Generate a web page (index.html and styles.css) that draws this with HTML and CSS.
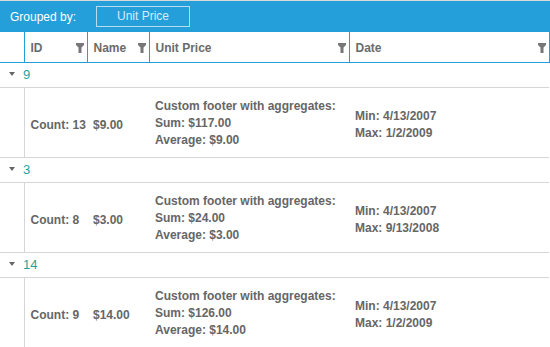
FILE: index.html
```html
<!DOCTYPE html>
<html lang="en">
<head>
    <meta charset="UTF-8">
    <title>Grouped Grid</title>
    <link rel="stylesheet" href="styles.css">
</head>
<body>

    <div class="grid">
        <!-- Group panel -->
        <div class="group-panel">
            <span class="group-label">Grouped by:</span>
            <span class="group-chip">Unit Price</span>
        </div>

        <table class="grid-table">
            <colgroup>
                <col class="col-indent">
                <col class="col-id">
                <col class="col-name">
                <col class="col-price">
                <col class="col-date">
            </colgroup>
            <thead>
                <tr>
                    <th class="indent"></th>
                    <th><span>ID</span><svg class="filter" viewBox="0 0 8 10"><path d="M0 0H8V2L5.5 4.5V10H2.5V4.5L0 2Z"/></svg></th>
                    <th><span>Name</span><svg class="filter" viewBox="0 0 8 10"><path d="M0 0H8V2L5.5 4.5V10H2.5V4.5L0 2Z"/></svg></th>
                    <th><span>Unit Price</span><svg class="filter" viewBox="0 0 8 10"><path d="M0 0H8V2L5.5 4.5V10H2.5V4.5L0 2Z"/></svg></th>
                    <th><span>Date</span><svg class="filter" viewBox="0 0 8 10"><path d="M0 0H8V2L5.5 4.5V10H2.5V4.5L0 2Z"/></svg></th>
                </tr>
            </thead>
            <tbody>
                <tr class="group-row">
                    <td colspan="5"><span class="arrow"></span><span class="group-value">9</span></td>
                </tr>
                <tr class="footer-row">
                    <td class="indent"></td>
                    <td>Count: 13</td>
                    <td>$9.00</td>
                    <td class="aggregates">Custom footer with aggregates:<br>Sum: $117.00<br>Average: $9.00</td>
                    <td>Min: 4/13/2007<br>Max: 1/2/2009</td>
                </tr>

                <tr class="group-row">
                    <td colspan="5"><span class="arrow"></span><span class="group-value">3</span></td>
                </tr>
                <tr class="footer-row">
                    <td class="indent"></td>
                    <td>Count: 8</td>
                    <td>$3.00</td>
                    <td class="aggregates">Custom footer with aggregates:<br>Sum: $24.00<br>Average: $3.00</td>
                    <td>Min: 4/13/2007<br>Max: 9/13/2008</td>
                </tr>

                <tr class="group-row">
                    <td colspan="5"><span class="arrow"></span><span class="group-value">14</span></td>
                </tr>
                <tr class="footer-row">
                    <td class="indent"></td>
                    <td>Count: 9</td>
                    <td>$14.00</td>
                    <td class="aggregates">Custom footer with aggregates:<br>Sum: $126.00<br>Average: $14.00</td>
                    <td>Min: 4/13/2007<br>Max: 1/2/2009</td>
                </tr>
            </tbody>
        </table>
    </div>

</body>
</html>
```

FILE: styles.css
```css
body {
    margin: 0;
    padding: 0;
    font-family: "Liberation Sans", Arial, sans-serif;
    font-size: 12px;
    color: #666;
    background-color: #fff;
}
.grid {
    width: 550px;
    height: 347px;
    overflow: hidden;
}

/* Group panel */
.group-panel {
    display: flex;
    align-items: center;
    height: 31px;
    border-top: 1px solid #d9d9d9;
    background-color: #259fd9;
    padding-left: 10px;
    box-sizing: content-box;
}
.group-label {
    color: #fff;
    width: 86px;
    padding-top: 1px;
}
.group-chip {
    box-sizing: border-box;
    width: 94px;
    height: 21px;
    line-height: 19px;
    border: 1px solid #b7dcf1;
    color: #d7ecf8;
    text-align: center;
}

/* Table */
.grid-table {
    border-collapse: collapse;
    table-layout: fixed;
    width: 549px;
}
.col-indent { width: 24px; }
.col-id { width: 63px; }
.col-name { width: 62px; }
.col-price { width: 200px; }
.col-date { width: 200px; }

th {
    height: 30px;
    padding: 2px 5px 0 6px;
    text-align: left;
    font-weight: bold;
    color: #6b6b6b;
    border-left: 1px solid #259fd9;
    border-right: 1px solid #259fd9;
    border-bottom: 1px solid #259fd9;
    box-sizing: border-box;
    position: relative;
}
th.indent {
    border-left: none;
}
th span {
    vertical-align: middle;
}
.filter {
    position: absolute;
    right: 3px;
    top: 11px;
    width: 8px;
    height: 10px;
    fill: #777;
}

.group-row td {
    height: 25px;
    padding: 1px 0 0;
    border-bottom: 1px solid #d6d6d6;
    box-sizing: border-box;
}
.arrow {
    display: inline-block;
    width: 0;
    height: 0;
    margin: 0 8px 2px 9px;
    border-left: 3px solid transparent;
    border-right: 3px solid transparent;
    border-top: 4px solid #666;
    vertical-align: middle;
}
.group-value {
    color: #1fa3a3;
    font-size: 13px;
    vertical-align: middle;
}

.footer-row td {
    height: 70px;
    padding: 6px 0 0 6px;
    font-weight: bold;
    line-height: 17px;
    border-bottom: 1px solid #d6d6d6;
    box-sizing: border-box;
    vertical-align: middle;
}
.footer-row td.aggregates {
    padding-top: 3px;
}
.footer-row td.indent {
    padding: 0;
    border-right: 1px solid #d6d6d6;
}
```
